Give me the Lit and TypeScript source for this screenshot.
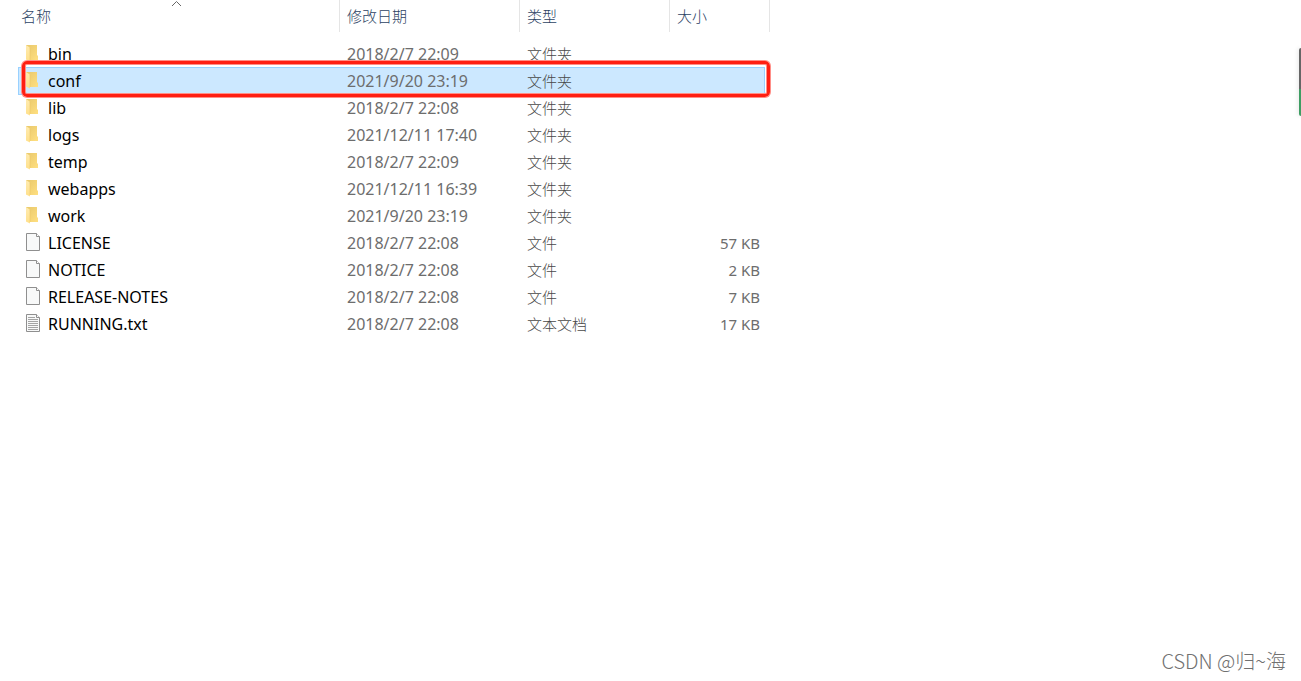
import { LitElement, html, svg, css } from "lit";
import { customElement, property, state } from "lit/decorators.js";

type Kind = "folder" | "file" | "text";

interface Entry {
  name: string;
  modified: string;
  kind: Kind;
  type: string;
  size: string;
}

const folder = (name: string, modified: string): Entry => ({
  name, modified, kind: "folder", type: "文件夹", size: "",
});
const file = (name: string, size: string): Entry => ({
  name, modified: "2018/2/7 22:08", kind: "file", type: "文件", size,
});

const ENTRIES: Entry[] = [
  folder("bin", "2018/2/7 22:09"),
  folder("conf", "2021/9/20 23:19"),
  folder("lib", "2018/2/7 22:08"),
  folder("logs", "2021/12/11 17:40"),
  folder("temp", "2018/2/7 22:09"),
  folder("webapps", "2021/12/11 16:39"),
  folder("work", "2021/9/20 23:19"),
  file("LICENSE", "57 KB"),
  file("NOTICE", "2 KB"),
  file("RELEASE-NOTES", "7 KB"),
  { name: "RUNNING.txt", modified: "2018/2/7 22:08", kind: "text", type: "文本文档", size: "17 KB" },
];

@customElement("entry-icon")
class EntryIcon extends LitElement {
  @property() kind: Kind = "file";

  static styles = css`
    :host { display: block; flex: none; width: 20px; height: 20px; }
    .icon { display: block; width: 20px; height: 20px; }
  `;

  render() {
    if (this.kind === "folder") {
      return html`<svg class="icon" viewBox="0 1 20 20" aria-hidden="true">
        <defs>
          <linearGradient id="back" x1="0" y1="0" x2="1" y2="1">
            <stop offset="0" stop-color="#e8c86c" />
            <stop offset="1" stop-color="#ffdf80" />
          </linearGradient>
          <linearGradient id="flap" x1="0" y1="0" x2="0" y2="1">
            <stop offset="0" stop-color="#ffebb0" />
            <stop offset="1" stop-color="#ffe08a" />
          </linearGradient>
        </defs>
        <path d="M2 2H13V12L14 13V17H5L2 16Z" fill="url(#back)" />
        <path d="M2 2L5 4Q6 4.500 6 6V18.500L2 16.500Z" fill="url(#flap)" />
        <path d="M6 5V17" stroke="#ecc766" stroke-width="0.600" />
      </svg>`;
    }
    return html`<svg class="icon" viewBox="0 1 20 20" aria-hidden="true">
      <path d="M2.500 1.500H12.500L15.500 4.500V18.500H2.500Z" fill="#f8f9f9" stroke="#8f8f8f" />
      <path d="M12.500 1.500V4.500H15.500" fill="#fff" stroke="#8f8f8f" />
      ${this.kind === "text"
        ? svg`<path d="M4 4.500H11M4 6.500H14M4 8.500H14M4 10.500H14M4 12.500H14M4 14.500H14M4 16.500H14" stroke="#a4a4a4" />`
        : null}
    </svg>`;
  }
}

@customElement("app-root")
class AppRoot extends LitElement {
  @state() private selected = "conf";

  static styles = css`
    :host {
      display: flex;
      flex-direction: column;
      position: relative;
      min-height: 100vh;
      box-sizing: border-box;
      padding-left: 18px;
      overflow: hidden;
      background: #fff;
      color: #6d6d6d;
      font-family: "Noto Sans", "Noto Sans CJK SC", sans-serif;
      font-size: 15px;
      line-height: 20px;
    }
    .list { flex: 1; }
    table { width: 752px; table-layout: fixed; border-collapse: separate; border-spacing: 0; }
    .col-name { width: 322px; }
    .col-date { width: 180px; }
    .col-type { width: 150px; }
    .col-size { width: 100px; }
    th {
      position: relative;
      height: 32px;
      padding: 0;
      border-right: 1px solid #e5e5e5;
      font-weight: 400;
    }
    .sort {
      display: block;
      width: 100%;
      height: 32px;
      padding: 0 7px;
      border: 0;
      background: none;
      color: #2c4263;
      font: inherit;
      font-weight: 300;
      text-align: left;
    }
    th:first-child .sort { padding-left: 3px; }
    .caret { position: absolute; left: 153px; top: 0; width: 11px; height: 7px; }
    tbody::before { content: ""; display: block; height: 8px; }
    td { height: 27px; padding: 0 7px; white-space: nowrap; }
    .name-cell { padding-left: 6px; }
    .name { display: flex; align-items: center; gap: 4px; color: #000; font-size: 16px; }
    .date { font-size: 16px; }
    .type { color: #484848; font-weight: 300; }
    .size { padding-right: 10px; text-align: right; }
    .selected { position: relative; z-index: 0; }
    .highlight {
      position: absolute;
      z-index: -1;
      inset: 0 5px -1px 0;
      border: 1px solid #99d1ff;
      background: #cce8ff;
    }
    .mark {
      position: absolute;
      inset: -6px 0 -3px 4px;
      border: 3px solid #ff1f12;
      border-radius: 5px;
      box-shadow: 0 0 0 1px #ff8f88, inset 0 0 0 1px #ff8f88;
      pointer-events: none;
    }
    .edge {
      position: absolute;
      right: 0;
      top: 48px;
      width: 2px;
      height: 68px;
      border-radius: 2px 0 0 2px;
      background: linear-gradient(#666 60%, #3f9d63 60%);
      box-shadow: 0 0 5px #0003;
    }
    .watermark {
      align-self: flex-end;
      padding: 0 15px 8px 0;
      color: #707070;
      font-family: "Noto Sans CJK SC", sans-serif;
      font-size: 20px;
      font-weight: 300;
      line-height: 24px;
    }
  `;

  render() {
    return html`
      <main class="list">
        <table>
          <colgroup>
            <col class="col-name" /><col class="col-date" /><col class="col-type" /><col class="col-size" />
          </colgroup>
          <thead>
            <tr>
              <th scope="col" aria-sort="ascending">
                <button class="sort">名称</button>
                <svg class="caret" viewBox="0 0 11 7" aria-hidden="true">
                  <path d="M1 6L5.500 1.500L10 6" fill="none" stroke="#666" />
                </svg>
              </th>
              <th scope="col"><button class="sort">修改日期</button></th>
              <th scope="col"><button class="sort">类型</button></th>
              <th scope="col"><button class="sort">大小</button></th>
            </tr>
          </thead>
          <tbody>
            ${ENTRIES.map((e) => {
              const on = e.name === this.selected;
              return html`<tr class=${on ? "selected" : ""} @click=${() => (this.selected = e.name)}>
                <td class="name-cell">
                  ${on ? html`<span class="highlight"></span><span class="mark"></span>` : null}
                  <span class="name"><entry-icon .kind=${e.kind}></entry-icon>${e.name}</span>
                </td>
                <td class="date">${e.modified}</td>
                <td class="type">${e.type}</td>
                <td class="size">${e.size}</td>
              </tr>`;
            })}
          </tbody>
        </table>
      </main>
      <span class="edge"></span>
      <footer class="watermark">CSDN @归~海</footer>
    `;
  }
}
